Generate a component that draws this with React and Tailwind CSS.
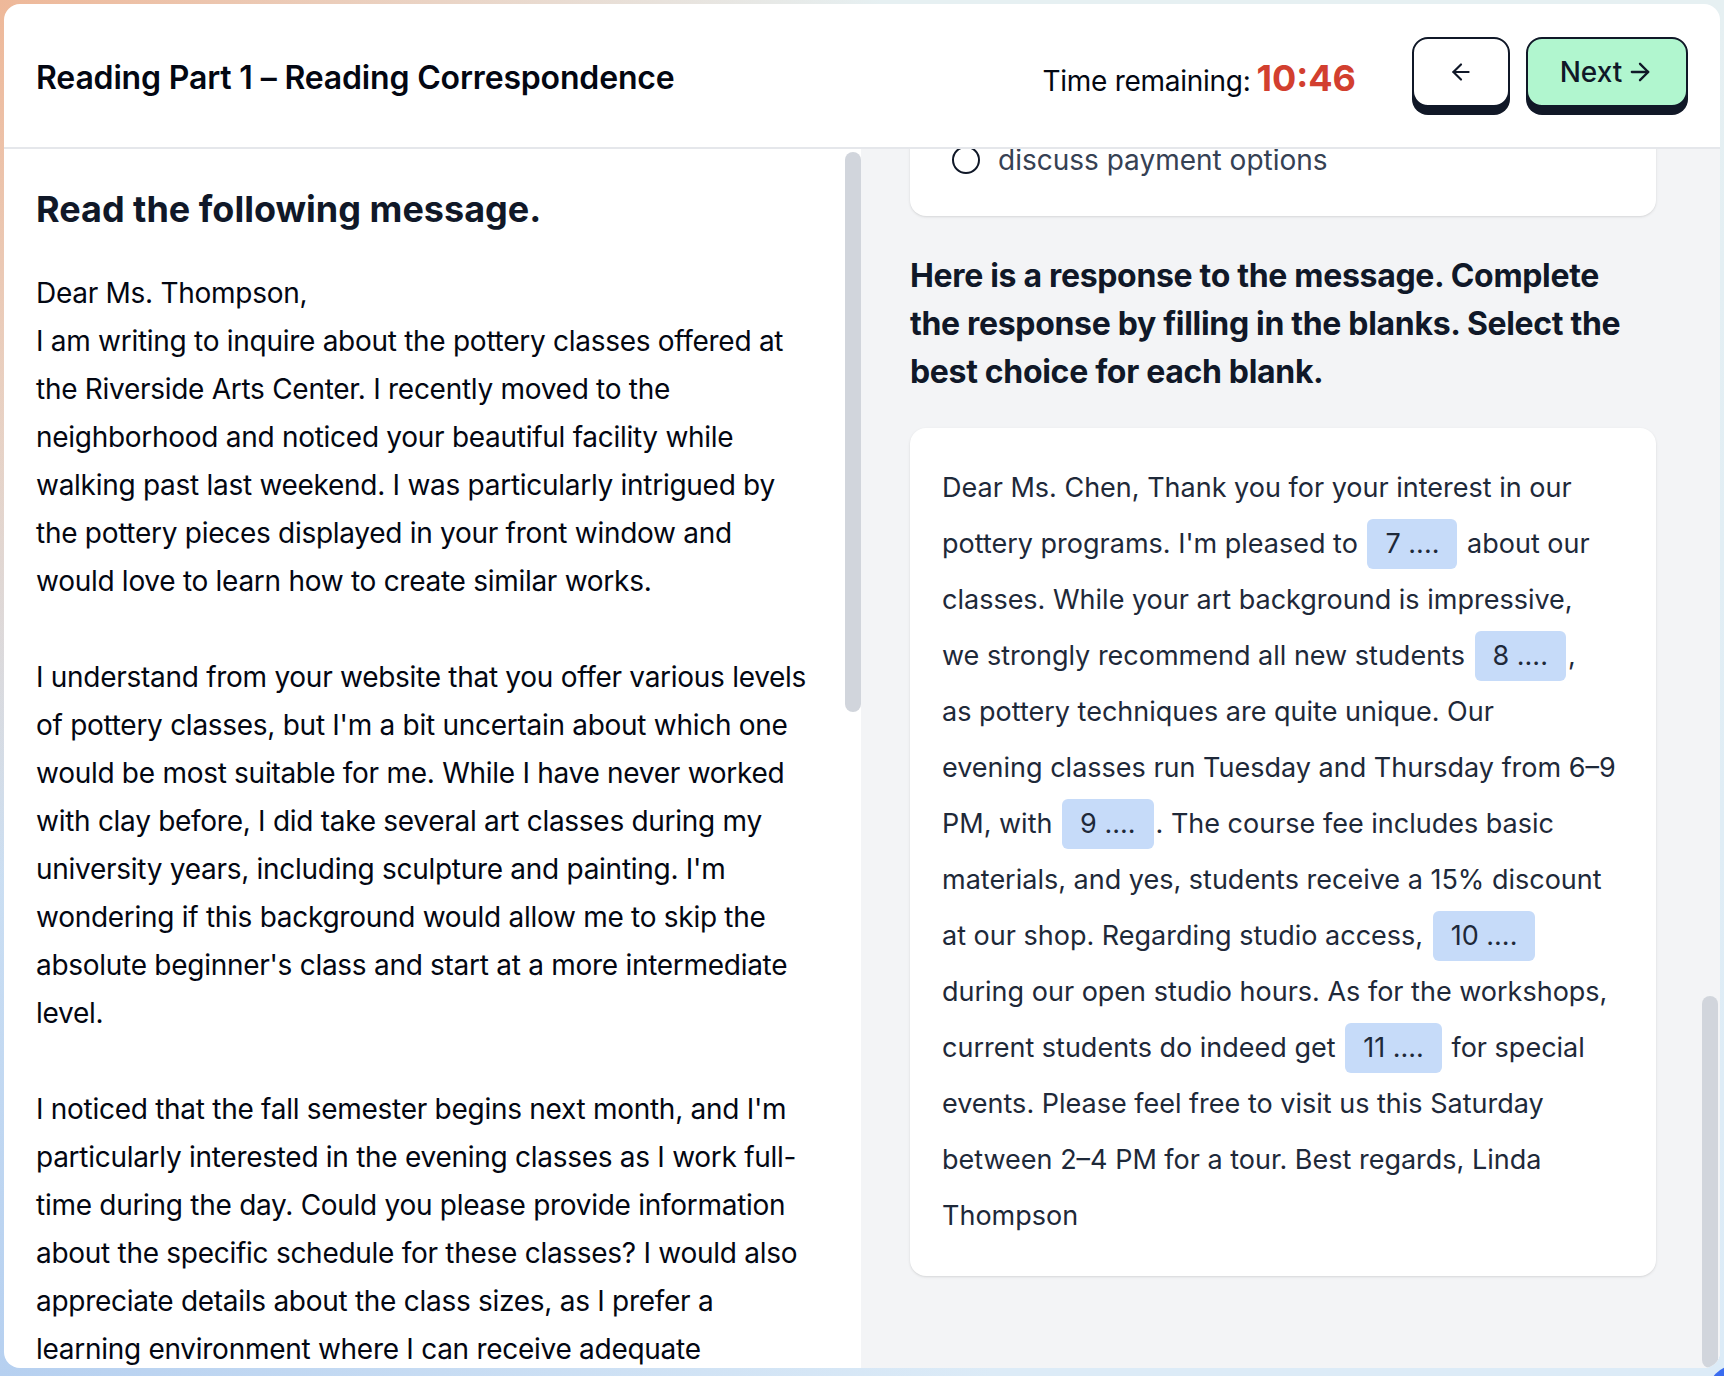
import { useLayoutEffect, useRef } from "react";
import { ArrowLeft, ArrowRight } from "lucide-react";

const questions = [
  {
    n: 1,
    text: "What is the main purpose of Ms. Chen's message?",
    options: [
      "to register for a class",
      "to ask for information about classes",
      "to complain about a service",
      "to request a refund",
    ],
  },
  {
    n: 2,
    text: "How did Ms. Chen learn about the arts center?",
    options: [
      "from a friend",
      "from an advertisement",
      "by walking past the building",
      "from a newspaper article",
    ],
  },
  {
    n: 3,
    text: "What experience does Ms. Chen have?",
    options: [
      "she has worked with clay before",
      "she took art classes at university",
      "she teaches painting",
      "she owns a pottery shop",
    ],
  },
  {
    n: 4,
    text: "Why is Ms. Chen interested in evening classes?",
    options: [
      "she works during the day",
      "she studies in the morning",
      "she prefers smaller groups",
      "she lives far away",
    ],
  },
  {
    n: 5,
    text: "What does Ms. Chen ask about the studio?",
    options: [
      "its opening date",
      "access outside class time",
      "the size of the rooms",
      "parking for students",
    ],
  },
  {
    n: 6,
    text: "What else would Ms. Chen like to do?",
    options: [
      "visit the center",
      "meet other students",
      "buy some pottery",
      "discuss payment options",
    ],
  },
];

const letter = `Dear Ms. Thompson,
I am writing to inquire about the pottery classes offered at the Riverside Arts Center. I recently moved to the neighborhood and noticed your beautiful facility while walking past last weekend. I was particularly intrigued by the pottery pieces displayed in your front window and would love to learn how to create similar works.

I understand from your website that you offer various levels of pottery classes, but I'm a bit uncertain about which one would be most suitable for me. While I have never worked with clay before, I did take several art classes during my university years, including sculpture and painting. I'm wondering if this background would allow me to skip the absolute beginner's class and start at a more intermediate level.

I noticed that the fall semester begins next month, and I'm particularly interested in the evening classes as I work full-time during the day. Could you please provide information about the specific schedule for these classes? I would also appreciate details about the class sizes, as I prefer a learning environment where I can receive adequate individual attention from the instructor.

I would also like to know whether the course fee covers materials such as clay and glazes, or whether these need to be purchased separately. If students receive any discount at your shop, that would be very helpful to know as well.

Finally, is it possible to use the studio outside of class time to practice? I also saw a poster about weekend workshops and wondered if current students receive any special offers for these events.

I would be happy to visit the center to see the facilities before registering. Please let me know when would be a convenient time.

Best regards,
Emily Chen`;

function Blank({ n }) {
  return (
    <span className="inline-block mx-0.5 px-[18px] py-2 leading-[34px] rounded-md bg-[#c6dbf9] text-gray-800">
      {n} ....
    </span>
  );
}

export default function App() {
  const rightRef = useRef(null);

  useLayoutEffect(() => {
    if (rightRef.current) {
      rightRef.current.scrollTop = rightRef.current.scrollHeight;
    }
  }, []);

  return (
    <div className="relative h-screen w-full overflow-hidden px-1 pt-1 pb-2 font-['Inter',sans-serif] bg-[radial-gradient(circle_at_0%_0%,#eeb899_0%,transparent_40%),radial-gradient(circle_at_0%_100%,#b6d0f0_0%,transparent_45%),linear-gradient(#e6f0f2,#dcebf7)]">
      <div className="h-full flex flex-col rounded-2xl bg-white overflow-hidden">
        {/* header */}
        <div className="h-[145px] shrink-0 flex items-center justify-between px-8 border-b-2 border-gray-200">
          <h1 className="text-[32px] font-semibold text-gray-950 tracking-[-0.005em] mt-1">
            Reading Part 1 – Reading Correspondence
          </h1>
          <div className="flex items-center">
            <div className="flex items-baseline gap-1.5 mr-14 mt-1">
              <span className="text-[28px] text-gray-950 tracking-[-0.01em]">Time remaining:</span>
              <span className="text-[36px] font-bold text-[#d23f2f]">10:46</span>
            </div>
            <button className="w-[98px] h-[70px] mb-2 flex items-center justify-center rounded-2xl border-2 border-gray-900 bg-white shadow-[0_8px_0_#111827] text-gray-900">
              <ArrowLeft size={26} strokeWidth={2} />
            </button>
            <button className="ml-4 w-[162px] h-[70px] mb-2 flex items-center justify-center gap-1 rounded-2xl border-2 border-gray-900 bg-[#b1f6cf] shadow-[0_8px_0_#111827] text-gray-900 text-[28px] font-medium">
              Next
              <ArrowRight size={28} strokeWidth={2} />
            </button>
          </div>
        </div>

        {/* body */}
        <div className="flex-1 min-h-0 grid grid-cols-2">
          <div className="relative min-h-0 border-r border-gray-100">
            <div className="h-full overflow-y-auto">
              <div className="pl-8 pr-12 pt-10 pb-16">
                <h2 className="text-[36px] leading-10 font-bold text-gray-900 mb-10">
                  Read the following message.
                </h2>
                <p className="text-[28px] leading-[48px] text-gray-950 whitespace-pre-line tracking-[-0.01em]">
                  {letter}
                </p>
              </div>
            </div>
            {/* scrollbar thumb */}
            <div className="absolute right-0 top-[3px] w-4 h-[560px] rounded-full bg-gray-300" />
          </div>

          <div className="relative min-h-0 bg-gray-100">
            <div ref={rightRef} className="h-full overflow-y-auto">
              <div className="pl-12 pr-16 pt-10 pb-[92px]">
                <p className="text-[32px] leading-[48px] font-bold text-gray-900 tracking-[-0.01em] mb-8">
                  Answer the following questions about the message.
                </p>
                <div className="space-y-6">
                  {questions.map((q) => (
                    <div key={q.n} className="rounded-2xl bg-white shadow-sm px-8 pt-8 pb-7">
                      <p className="text-[28px] font-semibold text-gray-900 mb-4">
                        {q.n}. {q.text}
                      </p>
                      <div className="space-y-2">
                        {q.options.map((o) => (
                          <div key={o} className="h-14 flex items-center gap-[18px] px-2.5">
                            <span className="w-7 h-7 rounded-full border-2 border-gray-900 shrink-0" />
                            <span className="text-[28px] text-gray-700">{o}</span>
                          </div>
                        ))}
                      </div>
                    </div>
                  ))}
                </div>

                <h2 className="mt-9 mb-8 text-[32px] leading-[48px] font-bold text-gray-900 tracking-[-0.01em]">
                  Here is a response to the message. Complete the response by filling in the blanks. Select the best choice for each blank.
                </h2>

                <div className="rounded-2xl bg-white shadow-sm py-8 pl-8 pr-5 text-[27px] leading-[56px] text-gray-800">
                  Dear Ms. Chen, Thank you for your interest in our<br />
                  pottery programs. I'm pleased to <Blank n={7} /> about our<br />
                  classes. While your art background is impressive,<br />
                  we strongly recommend all new students <Blank n={8} />,<br />
                  as pottery techniques are quite unique. Our<br />
                  evening classes run Tuesday and Thursday from 6–9<br />
                  PM, with <Blank n={9} />. The course fee includes basic<br />
                  materials, and yes, students receive a 15% discount<br />
                  at our shop. Regarding studio access, <Blank n={10} /><br />
                  during our open studio hours. As for the workshops,<br />
                  current students do indeed get <Blank n={11} /> for special<br />
                  events. Please feel free to visit us this Saturday<br />
                  between 2–4 PM for a tour. Best regards, Linda<br />
                  Thompson
                </div>
              </div>
            </div>
            {/* scrollbar thumb */}
            <div className="absolute right-0.5 bottom-0 w-4 h-[372px] rounded-full bg-gray-300" />
          </div>
        </div>
      </div>
      <div className="absolute left-[1708px] top-[1365px] w-14 h-14 rounded-full bg-[#3a6cf0]" />
    </div>
  );
}
